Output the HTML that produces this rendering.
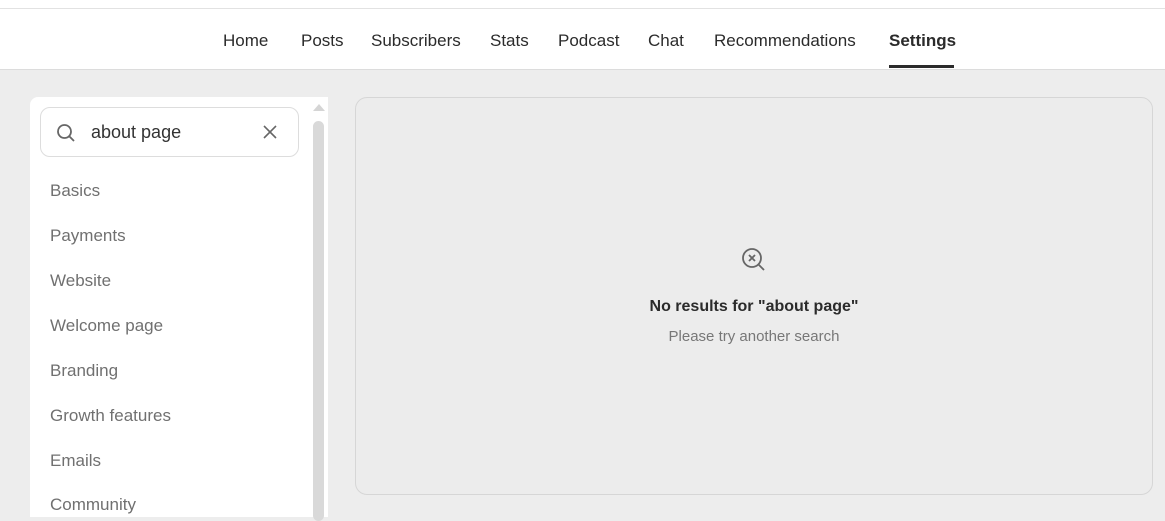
<!DOCTYPE html>
<html><head><style>
*{margin:0;padding:0;box-sizing:border-box}
body{width:1165px;height:513px;overflow:hidden;background:#ededed;font-family:"Liberation Sans",sans-serif;position:relative}
.top{position:absolute;left:0;top:0;width:1165px;height:70px;background:#fff;border-top:1px solid #e2e2e2;top:8px;height:62px;border-bottom:1px solid #dcdcdc}
.topw{position:absolute;left:0;top:0;width:1165px;height:8px;background:#fff}
.nav{position:absolute;top:22px;font-size:17px;color:#2b2b2b;white-space:nowrap}
.nav.a{font-weight:bold}
.ul{position:absolute;left:889px;top:65px;width:65px;height:3px;background:#2b2b2b}
.side{position:absolute;left:30px;top:97px;width:298px;height:420px;background:#fff;border-radius:8px 0 0 0}
.search{position:absolute;left:10px;top:10px;width:259px;height:50px;border:1px solid #ddd;border-radius:10px}
.search span{position:absolute;left:50px;top:14px;font-size:18px;color:#333}
.item{position:absolute;left:20px;font-size:17px;color:#707070}
.sb{position:absolute;left:283px;top:24px;width:11px;height:400px;background:#d9d9d9;border-radius:6px}
.main{position:absolute;left:355px;top:97px;width:798px;height:398px;border:1px solid #d6d6d6;border-radius:12px;background:#ececec}
</style></head><body>
<div class="topw"></div>
<div class="top"></div>
<div class="nav" style="left:223px;top:31px">Home</div>
<div class="nav" style="left:301px;top:31px">Posts</div>
<div class="nav" style="left:371px;top:31px">Subscribers</div>
<div class="nav" style="left:490px;top:31px">Stats</div>
<div class="nav" style="left:558px;top:31px">Podcast</div>
<div class="nav" style="left:648px;top:31px">Chat</div>
<div class="nav" style="left:714px;top:31px">Recommendations</div>
<div class="nav a" style="left:889px;top:31px">Settings</div>
<div class="ul"></div>
<div class="side">
 <div class="search">
  <svg style="position:absolute;left:15px;top:15px" width="20" height="20" viewBox="0 0 20 20" fill="none" stroke="#666" stroke-width="1.8"><circle cx="8.5" cy="8.5" r="6.5"/><path d="M13.5 13.5L18 18"/></svg>
  <span>about page</span>
  <svg style="position:absolute;left:222px;top:17px" width="14" height="14" viewBox="0 0 14 14" stroke="#666" stroke-width="1.6"><path d="M1 1L13 13M13 1L1 13"/></svg>
 </div>
 <svg style="position:absolute;left:282px;top:5px" width="14" height="10"><path d="M1 9L7 2L13 9Z" fill="#d5d5d5"/></svg>
 <div class="sb"></div>
 <div class="item" style="top:84px">Basics</div>
 <div class="item" style="top:129px">Payments</div>
 <div class="item" style="top:174px">Website</div>
 <div class="item" style="top:219px">Welcome page</div>
 <div class="item" style="top:264px">Branding</div>
 <div class="item" style="top:309px">Growth features</div>
 <div class="item" style="top:354px">Emails</div>
 <div class="item" style="top:398px">Community</div>
</div>
<div class="main">
 <svg style="position:absolute;left:385px;top:149px" width="26" height="26" viewBox="0 0 26 26" fill="none" stroke="#666" stroke-width="1.8"><circle cx="11" cy="11" r="9"/><path d="M17.5 17.5L23 23M8 8L14 14M14 8L8 14"/></svg>
 <div style="position:absolute;left:0;width:796px;top:200px;text-align:center;font-size:16px;font-weight:bold;color:#2b2b2b">No results for "about page"</div>
 <div style="position:absolute;left:0;width:796px;top:230px;text-align:center;font-size:15px;color:#777">Please try another search</div>
</div>
</body></html>
